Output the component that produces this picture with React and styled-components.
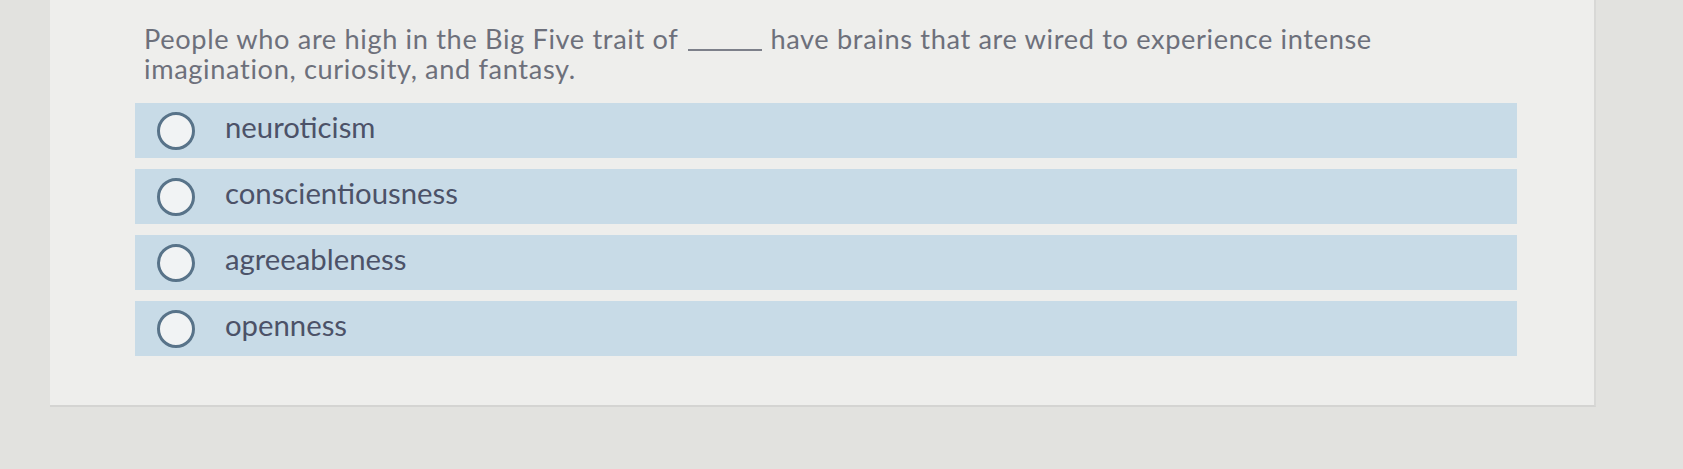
import React from "react";
import styled, { createGlobalStyle } from "styled-components";

const GlobalStyle = createGlobalStyle`
  html, body {
    margin: 0;
    padding: 0;
    background: #e2e2df;
  }
  body {
    font-family: Lato, "Open Sans", "Noto Sans", sans-serif;
    width: 1683px;
    height: 469px;
    overflow: hidden;
  }
`;

const Page = styled.div`
  display: flex;
  align-items: flex-start;
  padding-left: 50px;
  height: 469px;
  box-sizing: border-box;
`;

const Card = styled.section`
  width: 1546px;
  box-sizing: border-box;
  background: #eeeeec;
  border-bottom: 2px solid #d4d4d2;
  border-right: 2px solid #d8d8d6;
  padding: 24px 77px 49px 85px;
  display: flex;
  flex-direction: column;
`;

const Question = styled.p`
  margin: 0 0 19px 9px;
  font-size: 27.2px;
  letter-spacing: 0.64px;
  line-height: 30px;
  color: #6d707b;
`;

const Blank = styled.span`
  display: inline-block;
  width: 74px;
  height: 1px;
  margin: 0 8px 0 10px;
  border-bottom: 2px solid #7d808a;
  vertical-align: -2px;
`;

const Options = styled.div`
  display: flex;
  flex-direction: column;
  gap: 11px;
`;

const Option = styled.label`
  display: flex;
  align-items: center;
  height: 55px;
  padding-left: 22px;
  background: #c8dbe7;
  cursor: pointer;
`;

const Radio = styled.span`
  flex: none;
  width: 38px;
  height: 38px;
  border-radius: 50%;
  border: 3px solid #587389;
  background: #f1f3f4;
  box-sizing: border-box;
`;

const OptionText = styled.span`
  margin-left: 30px;
  font-size: 29.3px;
  line-height: 1;
  padding-bottom: 7px;
  color: #4c5268;
`;

const choices = ["neuroticism", "conscientiousness", "agreeableness", "openness"];

export default function App() {
  return (
    <>
      <GlobalStyle />
      <Page>
        <Card>
          <Question>
            People who are high in the Big Five trait of
            <Blank />
            have brains that are wired to experience intense
            <br />
            imagination, curiosity, and fantasy.
          </Question>
          <Options>
            {choices.map((c) => (
              <Option key={c}>
                <Radio />
                <OptionText>{c}</OptionText>
              </Option>
            ))}
          </Options>
        </Card>
      </Page>
    </>
  );
}
